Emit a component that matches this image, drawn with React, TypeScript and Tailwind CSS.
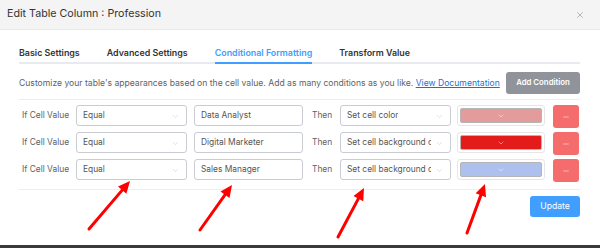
import { X, ChevronDown, Minus } from 'lucide-react'

const tabs = ['Basic Settings', 'Advanced Settings', 'Conditional Formatting', 'Transform Value']

const rows = [
  { op: 'Equal', value: 'Data Analyst', action: 'Set cell color', color: 'bg-[#e49b9b]' },
  { op: 'Equal', value: 'Digital Marketer', action: 'Set cell background color', color: 'bg-[#e31b1b]' },
  { op: 'Equal', value: 'Sales Manager', action: 'Set cell background color', color: 'bg-[#aec0ee]' },
]

// annotation arrows: [tailX, tailY, tipX, tipY]
const arrows = [
  [89, 229, 130, 181],
  [200, 230, 232, 185],
  [338, 237, 364, 188],
  [467, 233, 485, 184],
]

function Arrow({ a }: { a: number[] }) {
  const [x1, y1, x2, y2] = a
  const len = Math.hypot(x2 - x1, y2 - y1)
  const ux = (x2 - x1) / len
  const uy = (y2 - y1) / len
  const bx = x2 - ux * 12
  const by = y2 - uy * 12
  const nx = -uy * 5.5
  const ny = ux * 5.5
  return (
    <g>
      <line x1={x1} y1={y1} x2={bx + ux * 2} y2={by + uy * 2} stroke="#ff0000" strokeWidth={3} strokeLinecap="round" />
      <polygon points={`${x2},${y2} ${bx + nx},${by + ny} ${bx - nx},${by - ny}`} fill="#ff0000" />
    </g>
  )
}

function Select({ text, width }: { text: string; width: string }) {
  return (
    <div className={`${width} h-[21px] border border-[#c9ccd3] rounded-[3px] bg-white flex items-center pl-[6px] relative`}>
      <span className="overflow-hidden whitespace-nowrap mr-[19px] text-[#555]">{text}</span>
      <ChevronDown className="absolute right-[6px] top-[6px] w-[9px] h-[9px] text-[#c0c4cc]" strokeWidth={1.4} />
    </div>
  )
}

export default function App() {
  return (
    <div className="w-[600px] h-[248px] bg-white relative overflow-hidden flex flex-col border-b-[3px] border-[#3a3a3a] font-[Inter,sans-serif]">
      <div className="h-[30px] shrink-0 bg-[#f4f4f4] border-b border-[#e8e8e8] flex items-center justify-between pl-[7px] pr-[15px]">
        <span className="text-[10.7px] text-[#333]">Edit Table Column : Profession</span>
        <X className="w-[10px] h-[10px] text-[#9a9a9a]" strokeWidth={1.6} />
      </div>

      <div className="pl-[19px] pr-[20px]">
        <div className="mt-[10px] flex gap-[27px] border-b-2 border-[#e8eaf0]">
          {tabs.map((t) => (
            <div
              key={t}
              className={`h-[24px] -mb-[2px] border-b-2 pt-[6px] text-[8.9px] font-semibold ${
                t === 'Conditional Formatting' ? 'border-[#409eff] text-[#409eff]' : 'border-transparent text-[#333]'
              }`}
            >
              {t}
            </div>
          ))}
        </div>

        <div className="flex items-center justify-between mt-[8px] pb-[5px] border-b border-[#ebeef5]">
          <p className="text-[8.6px] text-[#606266] whitespace-nowrap">
            Customize your table's appearances based on the cell value. Add as many conditions as you like.{' '}
            <span className="text-[#1f6fd1] underline">View Documentation</span>
          </p>
          <button className="w-[74px] h-[22px] rounded-[3px] bg-[#909399] text-white text-[7.8px] font-semibold">
            Add Condition
          </button>
        </div>

        <div className="mt-[5px] pb-[7px] border-b border-[#ebeef5] flex flex-col gap-[4px] text-[8.4px]">
          {rows.map((r) => (
            <div key={r.value} className="flex items-start h-[23px]">
              <span className="w-[57px] pl-[3px] h-[21px] flex items-center text-[#606266]">If Cell Value</span>
              <Select text={r.op} width="w-[111px]" />
              <div className="ml-[7px] w-[109px] h-[21px] border border-[#c9ccd3] rounded-[3px] flex items-center px-[6px] text-[#555]">
                {r.value}
              </div>
              <span className="w-[37px] pl-[9px] h-[21px] flex items-center text-[#606266]">Then</span>
              <Select text={r.action} width="w-[111px]" />
              <div className="ml-[6px] w-[88px] h-[21px] border border-[#e6e6e6] rounded-[3px] p-[2px]">
                <div className={`w-full h-full ${r.color} border border-[#b5b5b5] rounded-[2px] flex items-center justify-center`}>
                  <ChevronDown className="w-[8px] h-[8px] text-white/70" strokeWidth={2} />
                </div>
              </div>
              <button className="ml-[8px] w-[26px] h-[23px] rounded-[3px] bg-[#f56c6c] flex items-center justify-center">
                <Minus className="w-[8px] h-[8px] text-white" strokeWidth={1.5} />
              </button>
            </div>
          ))}
        </div>

        <div className="flex justify-end pt-[6px]">
          <button className="w-[50px] h-[21px] rounded-[3px] bg-[#409eff] text-white text-[8.6px]">Update</button>
        </div>
      </div>

      <svg className="absolute inset-0 pointer-events-none" width={600} height={248}>
        {arrows.map((a, i) => (
          <Arrow key={i} a={a} />
        ))}
      </svg>
    </div>
  )
}
